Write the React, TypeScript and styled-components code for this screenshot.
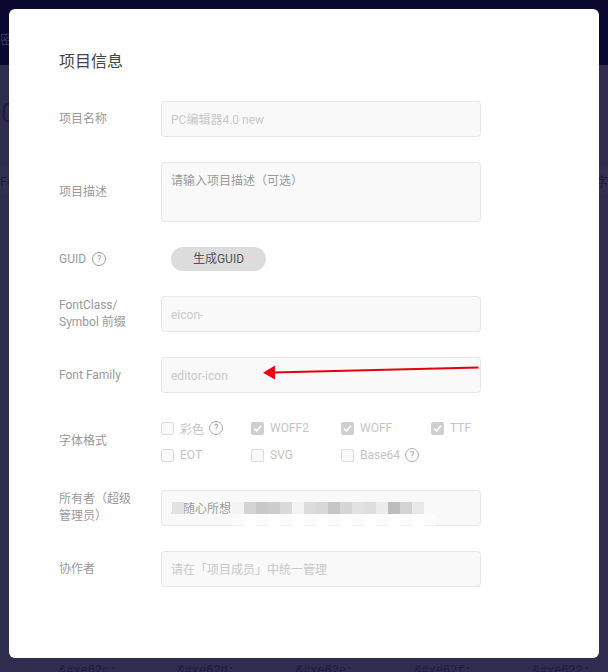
import React from 'react';
import styled, { createGlobalStyle } from 'styled-components';

const cjk = `Roboto, "Noto Sans CJK SC", sans-serif`;

const GlobalStyle = createGlobalStyle`
    html, body {
        margin: 0;
        padding: 0;
        background: #2f2c50;
    }
    body {
        font-family: ${cjk};
    }
`;

const Page = styled.div`
    position: relative;
    width: 608px;
    height: 672px;
    overflow: hidden;
    background: #2f2c50;
    color: #1e1b3e;
`;

const TopBar = styled.header`
    height: 65px;
    background: #0b0830;
    color: #3a3760;
    font-size: 13px;
    line-height: 80px;
`;

const StatLine = styled.div`
    height: 100px;
    padding-left: 1px;
    font-size: 26px;
    line-height: 96px;
`;

const TableHead = styled.div`
    display: flex;
    justify-content: space-between;
    height: 30px;
    background: #33304f;
    font-size: 13px;
    line-height: 34px;
`;

const GlyphRow = styled.div`
    display: grid;
    grid-template-columns: repeat(5, 118.4px);
    margin-top: 468px;
    padding-left: 59px;
    font: 12px/16px "Liberation Mono", monospace;
`;

const Modal = styled.section`
    position: absolute;
    left: 9px;
    top: 9px;
    box-sizing: border-box;
    width: 590px;
    height: 649px;
    padding: 43px 50px 0;
    background: #fff;
    border-radius: 6px;
`;

const Title = styled.h2`
    margin: 0 0 29px;
    height: 20px;
    color: #444;
    font-size: 16px;
    font-weight: 400;
    line-height: 20px;
`;

const Form = styled.div`
    display: flex;
    flex-direction: column;
    gap: 25px;
`;

const Row = styled.div<{ $height: number }>`
    display: grid;
    grid-template-columns: 102px 320px;
    align-items: center;
    height: ${({ $height }) => $height}px;
`;

const Label = styled.label`
    display: flex;
    align-items: center;
    gap: 6px;
    color: #999;
    font-size: 12px;
    line-height: 17px;
`;

const Field = styled.div<{ $tall?: boolean; $dim?: boolean }>`
    position: relative;
    box-sizing: border-box;
    height: ${({ $tall }) => ($tall ? 60 : 36)}px;
    padding: ${({ $tall }) => ($tall ? '9px 9px' : '0 9px')};
    background: #f9f9f9;
    border: 1px solid #e6e6e6;
    border-radius: 4px;
    color: ${({ $dim }) => ($dim ? '#999' : '#c8c8c8')};
    font-size: 12px;
    line-height: ${({ $tall }) => ($tall ? '18px' : '36px')};
`;

const GuidButton = styled.button`
    width: 95px;
    height: 24px;
    margin-left: 10px;
    padding: 0;
    background: #dcdcdc;
    border: 0;
    border-radius: 12px;
    color: #555;
    font-family: ${cjk};
    font-size: 12px;
    line-height: 24px;
`;

const Help = styled.span<{ $light?: boolean }>`
    display: inline-flex;
    align-items: center;
    justify-content: center;
    box-sizing: border-box;
    width: 14px;
    height: 14px;
    border: 1px solid ${({ $light }) => ($light ? '#aaa' : '#999')};
    border-radius: 50%;
    color: #999;
    font-size: 9px;
    line-height: 1;
`;

const FormatGrid = styled.div`
    display: grid;
    grid-template-columns: repeat(4, 90px);
    row-gap: 13px;
`;

const Option = styled.div`
    display: flex;
    align-items: center;
    height: 14px;
    color: #c4c4c4;
    font-size: 12px;
`;

const Box = styled.span<{ $checked?: boolean }>`
    display: flex;
    align-items: center;
    justify-content: center;
    box-sizing: border-box;
    width: 13px;
    height: 13px;
    margin-right: 6px;
    background: ${({ $checked }) => ($checked ? '#cfcfcf' : '#f9f9f9')};
    border: 1px solid ${({ $checked }) => ($checked ? '#cfcfcf' : '#dcdcdc')};
    border-radius: 2px;
`;

const OptionHelp = styled(Help)`
    margin-left: 5px;
`;

const Mosaic = styled.svg`
    position: absolute;
    left: 10px;
    top: 11px;
`;

const Arrow = styled.svg`
    position: absolute;
    left: 250px;
    top: 350px;
`;

const Check = () => (
    <svg width="9" height="9" viewBox="0 0 9 9" fill="none">
        <path d="M1.2 4.6 3.6 7 7.9 1.8" stroke="#fff" strokeWidth="1.6" />
    </svg>
);

const formats = [
    { name: '彩色', help: true },
    { name: 'WOFF2', checked: true },
    { name: 'WOFF', checked: true },
    { name: 'TTF', checked: true },
    { name: 'EOT' },
    { name: 'SVG' },
    { name: 'Base64', help: true },
];

const upperBlocks: [number, string][] = [
    [0, '#e2e2e2'], [60, '#f4f4f4'], [72, '#d4d4d4'], [84, '#c8c8c8'], [96, '#cccccc'], [108, '#dadada'],
    [120, '#f4f4f4'], [132, '#dcdcdc'], [144, '#d8d8d8'], [156, '#c6c6c6'], [168, '#d6d6d6'], [180, '#e2e2e2'], [192, '#dedede'],
    [204, '#ececec'], [216, '#bcbcbc'], [228, '#d4d4d4'], [240, '#e8e8e8'],
];

const lowerBlocks = [60, 72, 84, 96, 108, 120, 132, 144, 156, 168, 180, 192, 204, 216, 228, 240, 252];

const App = () => {
    return (
        <Page>
            <GlobalStyle />
            <TopBar>密</TopBar>
            <StatLine>0</StatLine>
            <TableHead>
                <span>Fo</span>
                <span>字</span>
            </TableHead>
            <GlyphRow>
                <span>&amp;#xe62c;</span>
                <span>&amp;#xe62d;</span>
                <span>&amp;#xe62e;</span>
                <span>&amp;#xe62f;</span>
                <span>&amp;#xe622;</span>
            </GlyphRow>
            <Modal>
                <Title>项目信息</Title>
                <Form>
                    <Row $height={36}>
                        <Label>项目名称</Label>
                        <Field>PC编辑器4.0 new</Field>
                    </Row>
                    <Row $height={60}>
                        <Label>项目描述</Label>
                        <Field $tall $dim>请输入项目描述（可选）</Field>
                    </Row>
                    <Row $height={24}>
                        <Label>GUID <Help>?</Help></Label>
                        <GuidButton>生成GUID</GuidButton>
                    </Row>
                    <Row $height={36}>
                        <Label>FontClass/<br />Symbol 前缀</Label>
                        <Field>eicon-</Field>
                    </Row>
                    <Row $height={36}>
                        <Label>Font Family</Label>
                        <Field>editor-icon</Field>
                    </Row>
                    <Row $height={47}>
                        <Label>字体格式</Label>
                        <FormatGrid>
                            {formats.map((format) => (
                                <Option key={format.name}>
                                    <Box $checked={format.checked}>{format.checked && <Check />}</Box>
                                    {format.name}
                                    {format.help && <OptionHelp $light>?</OptionHelp>}
                                </Option>
                            ))}
                        </FormatGrid>
                    </Row>
                    <Row $height={36}>
                        <Label>所有者（超级<br />管理员）</Label>
                        <Field $dim>
                            川随心所想
                            <Mosaic width="264" height="24" viewBox="0 0 264 24">
                                {upperBlocks.map(([x, fill]) => (
                                    <rect key={x} x={x} y="0" width="12" height="12" fill={fill} />
                                ))}
                                {lowerBlocks.map((x) => (
                                    <rect key={x} x={x} y="12" width="12" height="12" fill="#fff" opacity={x % 24 === 0 ? 0.9 : 0.45} />
                                ))}
                            </Mosaic>
                        </Field>
                    </Row>
                    <Row $height={36}>
                        <Label>协作者</Label>
                        <Field>请在「项目成员」中统一管理</Field>
                    </Row>
                </Form>
                <Arrow width="225" height="30" viewBox="0 0 225 30" fill="none">
                    <path d="M219.5 8.5 14 13.5" stroke="#e0000f" strokeWidth="2" />
                    <path d="M4 13.7 16 6.5V20.5Z" fill="#f00010" />
                </Arrow>
            </Modal>
        </Page>
    );
};

export default App;
